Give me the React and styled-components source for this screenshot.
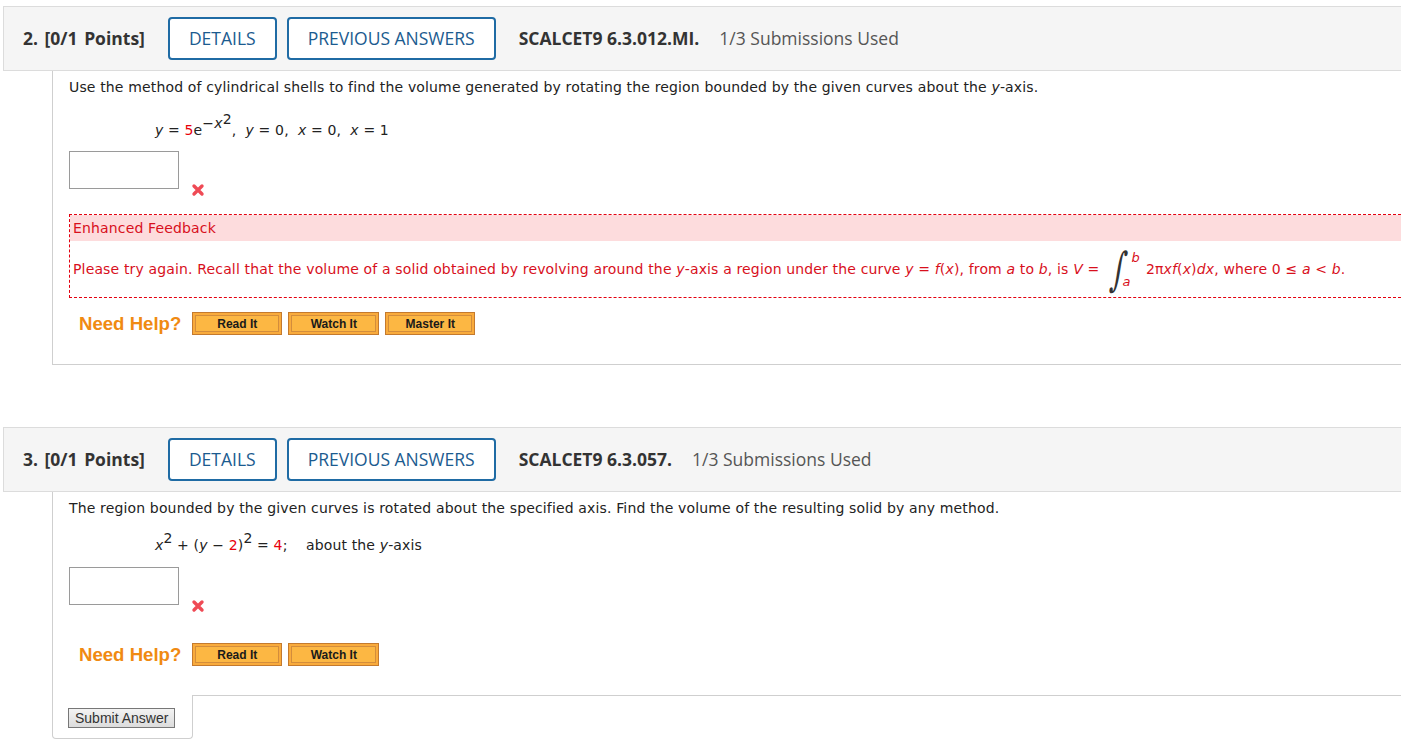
import React from 'react';
import styled, { createGlobalStyle } from 'styled-components';

const GlobalStyle = createGlobalStyle`
  body {
    margin: 0;
    background: #fff;
    font-family: 'DejaVu Sans', Verdana, sans-serif;
    color: #222;
  }
`;

const Page = styled.div`
  padding: 6px 0 0 3px;
  height: 734px;
  overflow: hidden;
`;

const Header = styled.div`
  display: flex;
  align-items: center;
  height: 63px;
  margin-top: ${(p) => p.$top || 0}px;
  padding-left: 19px;
  background: #f5f5f5;
  border: 1px solid #dcdcdc;
  border-right: none;
  font-family: 'Open Sans', 'Liberation Sans', sans-serif;
  font-size: 17.5px;
  line-height: 22px;
  white-space: nowrap;
`;

const Points = styled.span`
  font-weight: 700;
  color: #333;
  word-spacing: 2px;
  margin-top: -2px;
`;

const HeaderButton = styled.button`
  height: 43px;
  margin-left: ${(p) => p.$gap}px;
  padding: 0 19px 2px;
  background: #fff;
  border: 2px solid #1f6ba4;
  border-radius: 4px;
  color: #1b5b8f;
  font-family: 'Open Sans', 'Liberation Sans', sans-serif;
  font-size: 17.5px;
`;

const Code = styled.span`
  margin: -2px 0 0 23px;
  font-weight: 700;
  color: #333;
`;

const Used = styled.span`
  margin: -2px 0 0 20px;
  color: #555;
`;

const Body = styled.div`
  margin-left: 49px;
  padding: 7px 0 29px 16px;
  border-left: 1px solid #cfcfcf;
  border-bottom: ${(p) => (p.$closed ? '1px solid #cfcfcf' : 'none')};
  font-size: 14px;
  letter-spacing: 0.15px;
`;

const Prompt = styled.p`
  margin: 0;
  line-height: 18px;
  white-space: nowrap;
`;

const Equation = styled.div`
  margin: ${(p) => p.$top}px 0 0 86px;
  height: 24px;
  line-height: 24px;
  white-space: pre;
`;

const Var = styled.i`
  font-style: italic;
`;

const Num = styled.span`
  color: #e8000b;
`;

const Sup = styled.span`
  position: relative;
  top: ${(p) => p.$up || -7}px;
  font-size: 14px;
`;

const AnswerRow = styled.div`
  display: flex;
  align-items: flex-end;
  margin-top: ${(p) => p.$top}px;
`;

const AnswerBox = styled.div`
  width: 108px;
  height: 36px;
  border: 1px solid #9a9a9a;
`;

const WrongMark = styled.svg`
  width: 14px;
  height: 14px;
  margin: 0 0 -8px 12px;
`;

const Feedback = styled.div`
  margin-top: 25px;
  border: 1px dashed #e4000f;
  border-right: none;
  color: #d8101c;
`;

const FeedbackTitle = styled.div`
  height: 26px;
  line-height: 26px;
  padding-left: 3px;
  background: #fddcdd;
`;

const FeedbackText = styled.div`
  display: flex;
  align-items: center;
  height: 56px;
  padding-left: 3px;
  white-space: pre;
`;

const IntegralWrap = styled.span`
  display: inline-flex;
  align-items: center;
  margin: 0 6px 0 8px;
`;

const IntegralSign = styled.span`
  font-family: 'DejaVu Serif', serif;
  font-size: 46px;
  line-height: 50px;
  color: #333;
  transform: skewX(-8deg) scaleX(0.6);
`;

const Limits = styled.span`
  display: flex;
  flex-direction: column;
  justify-content: space-between;
  height: 38px;
  margin: 2px 0 0 0;
  font-size: 13px;
  font-style: italic;
  line-height: 14px;
`;

const Lower = styled.span`
  margin-left: -9px;
`;

const HelpRow = styled.div`
  display: flex;
  align-items: center;
  margin-top: ${(p) => p.$top}px;
  padding-left: 10px;
  letter-spacing: 0;
`;

const HelpLabel = styled.span`
  margin-right: 11px;
  font-family: 'Liberation Sans', Arial, sans-serif;
  font-size: 18.6px;
  font-weight: 700;
  color: #f08a12;
`;

const HelpButton = styled.button`
  box-sizing: border-box;
  width: ${(p) => p.$w || 90}px;
  height: 23px;
  margin-right: 6px;
  padding: 0;
  background: #fcb743;
  border: 1px solid #c47a2e;
  box-shadow: inset 0 0 0 2px #f9ab3c, inset 0 0 0 3px #d38d3c;
  font-family: 'Liberation Sans', Arial, sans-serif;
  font-size: 12px;
  font-weight: 700;
  color: #1a1a1a;
`;

const Footer = styled.div`
  display: flex;
  margin-left: 49px;
`;

const SubmitCell = styled.div`
  box-sizing: border-box;
  width: 141px;
  height: 44px;
  padding: 13px 0 0 15px;
  border: 1px solid #cfcfcf;
  border-top: none;
  border-radius: 0 0 4px 4px;
`;

const RestCell = styled.div`
  flex: 1;
  border-top: 1px solid #cfcfcf;
`;

const SubmitButton = styled.button`
  height: 20px;
  padding: 0 6px;
  background: linear-gradient(#f3f3f3, #dcdcdc);
  border: 1px solid #777;
  font-family: 'Liberation Sans', Arial, sans-serif;
  font-size: 14px;
  color: #333;
`;

function Cross() {
  return (
    <WrongMark viewBox="0 0 14 14">
      <path d="M3 3 L11 11 M11 3 L3 11" stroke="#ef4a55" strokeWidth="3.4" strokeLinecap="round" />
    </WrongMark>
  );
}

function QuestionHeader({ num, code, top }) {
  return (
    <Header $top={top}>
      <Points>{num}. [0/1 Points]</Points>
      <HeaderButton $gap={23}>DETAILS</HeaderButton>
      <HeaderButton $gap={10}>PREVIOUS ANSWERS</HeaderButton>
      <Code>{code}</Code>
      <Used>1/3 Submissions Used</Used>
    </Header>
  );
}

function HelpButtons({ items, top }) {
  return (
    <HelpRow $top={top}>
      <HelpLabel>Need Help?</HelpLabel>
      {items.map((label) => (
        <HelpButton key={label} $w={label === 'Watch It' ? 91 : 90}>
          {label}
        </HelpButton>
      ))}
    </HelpRow>
  );
}

export default function App() {
  return (
    <Page>
      <GlobalStyle />

      <QuestionHeader num={2} code="SCALCET9 6.3.012.MI." />
      <Body $closed>
        <Prompt>
          Use the method of cylindrical shells to find the volume generated by rotating the region bounded by the given
          curves about the <Var>y</Var>-axis.
        </Prompt>
        <Equation $top={22}>
          <Var>y</Var> = <Num>5</Num>e
          <Sup $up={-7}>
            −<Var>x</Var>
            <Sup $up={-4}>2</Sup>
          </Sup>
          ,  <Var>y</Var> = 0,  <Var>x</Var> = 0,  <Var>x</Var> = 1
        </Equation>
        <AnswerRow $top={9}>
          <AnswerBox />
          <Cross />
        </AnswerRow>
        <Feedback>
          <FeedbackTitle>Enhanced Feedback</FeedbackTitle>
          <FeedbackText>
            Please try again. Recall that the volume of a solid obtained by revolving around the <Var>y</Var>-axis a
            region under the curve <Var>y</Var> = <Var>f</Var>(<Var>x</Var>), from <Var>a</Var> to <Var>b</Var>, is{' '}
            <Var>V</Var> =
            <IntegralWrap>
              <IntegralSign>∫</IntegralSign>
              <Limits>
                <span>b</span>
                <Lower>a</Lower>
              </Limits>
            </IntegralWrap>
            2π<Var>xf</Var>(<Var>x</Var>)<Var>dx</Var>, where 0 ≤ <Var>a</Var> &lt; <Var>b</Var>.
          </FeedbackText>
        </Feedback>
        <HelpButtons top={14} items={['Read It', 'Watch It', 'Master It']} />
      </Body>

      <QuestionHeader num={3} code="SCALCET9 6.3.057." top={62} />
      <Body>
        <Prompt>
          The region bounded by the given curves is rotated about the specified axis. Find the volume of the resulting
          solid by any method.
        </Prompt>
        <Equation $top={16}>
          <Var>x</Var>
          <Sup>2</Sup> + (<Var>y</Var> − <Num>2</Num>)<Sup>2</Sup> = <Num>4</Num>;    about the <Var>y</Var>-axis
        </Equation>
        <AnswerRow $top={10}>
          <AnswerBox />
          <Cross />
        </AnswerRow>
        <HelpButtons top={38} items={['Read It', 'Watch It']} />
      </Body>
      <Footer>
        <SubmitCell>
          <SubmitButton>Submit Answer</SubmitButton>
        </SubmitCell>
        <RestCell />
      </Footer>
    </Page>
  );
}
